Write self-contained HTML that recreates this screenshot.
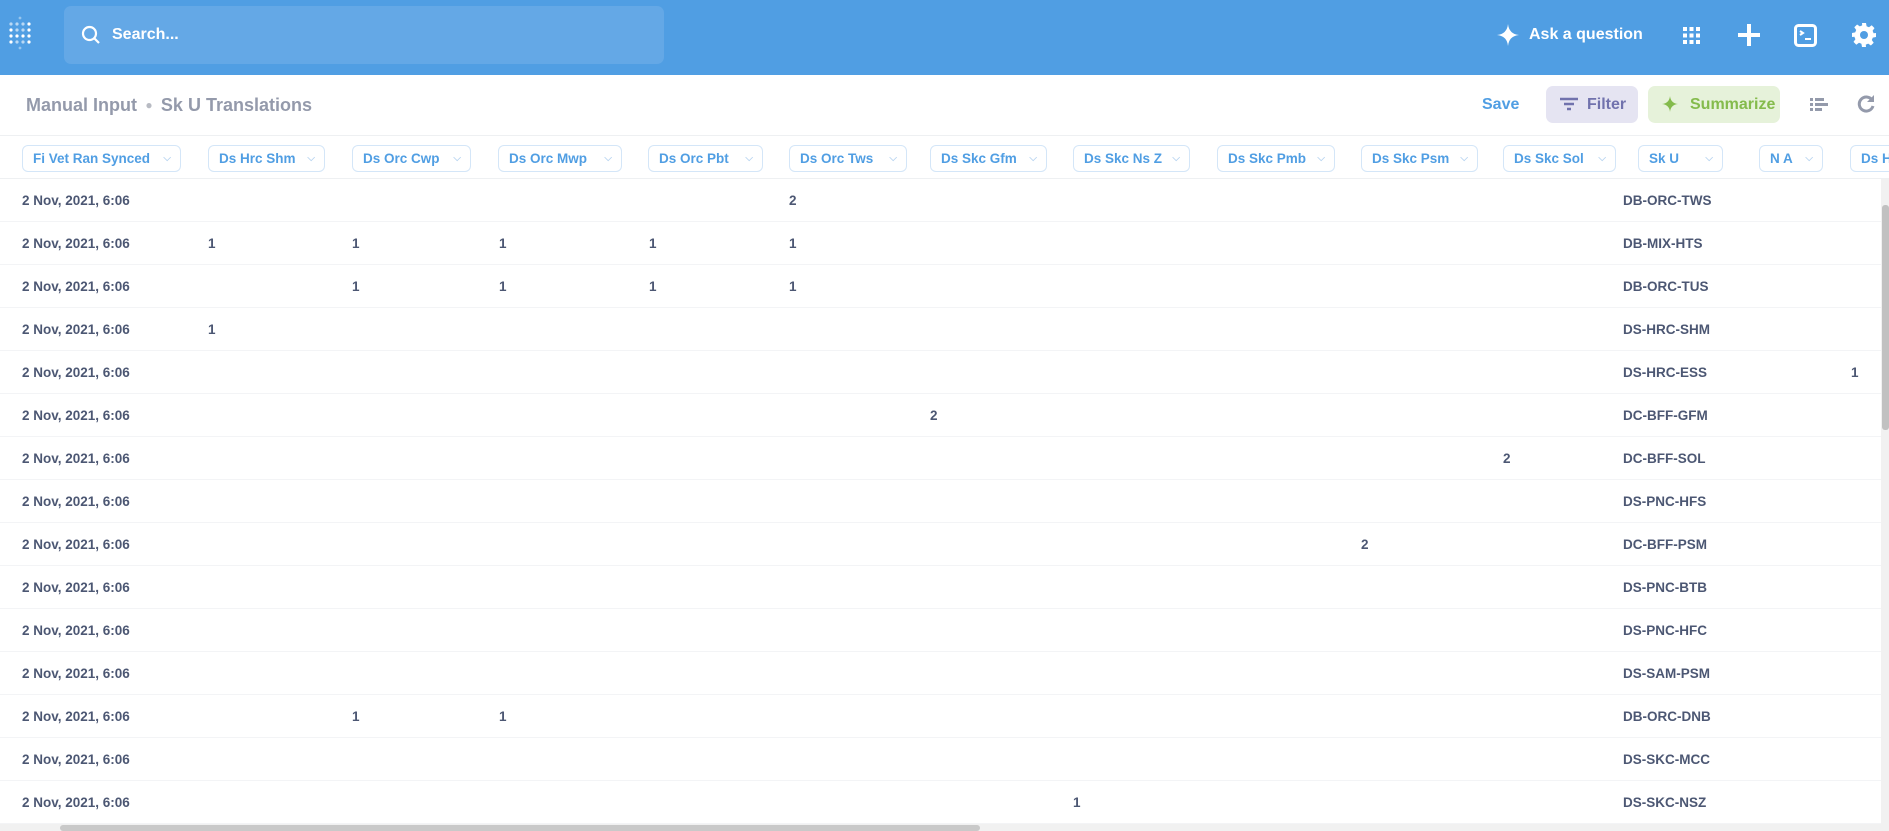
<!DOCTYPE html>
<html><head><style>
*{box-sizing:border-box;margin:0;padding:0}
body{width:1889px;height:831px;overflow:hidden;background:#fff;font-family:"Liberation Sans",sans-serif;position:relative}
.top{position:absolute;left:0;top:0;width:1889px;height:75px;background:#509ee3}
.search{position:absolute;left:64px;top:6px;width:600px;height:58px;background:#64a8e6;border-radius:7px;color:#fff;font-weight:bold;font-size:16px}
.search span{position:absolute;left:48px;top:20px}
.ask{position:absolute;left:1529px;top:26px;color:#fff;font-weight:bold;font-size:16px}
.bc{position:absolute;left:26px;top:95px;font-size:18px;color:#949aab;font-weight:bold}
.bar2{position:absolute;left:0;top:135px;width:1889px;border-top:1px solid #eef0f2}
.pill{position:absolute;top:145px;height:27px;border:1px solid #d4e6f8;border-radius:6px;color:#509ee3;font-weight:bold;font-size:13.5px;padding:5px 0 0 10px;white-space:nowrap;overflow:hidden}
.pill i{font-style:normal;color:#b8d4f0;font-size:10px;position:absolute;right:9px;top:7px}
.hl{position:absolute;left:0;top:178px;width:1889px;border-top:1px solid #eef0f2}
.row{position:absolute;left:0;width:1882px;height:43px;border-bottom:1px solid #f3f4f6}
.row span{position:absolute;top:14px;font-size:13.5px;font-weight:bold;color:#4c5773}
.btn{position:absolute;top:86px;height:37px;border-radius:7px;font-weight:bold;font-size:16px;padding-top:10px}
</style></head><body>
<div class="top">
<svg style="position:absolute;left:9px;top:15px" width="24" height="40" viewBox="0 0 24 40">
<g fill="#fff">
<circle cx="2" cy="9" r="1.6" opacity=".6"/><circle cx="8" cy="9" r="1.6" opacity=".6"/><circle cx="14" cy="9" r="1.6" opacity=".6"/><circle cx="20" cy="9" r="1.6"/>
<circle cx="2" cy="15" r="1.6"/><circle cx="8" cy="15" r="1.6" opacity=".6"/><circle cx="14" cy="15" r="1.6" opacity=".6"/><circle cx="20" cy="15" r="1.6"/>
<circle cx="2" cy="21" r="1.6"/><circle cx="8" cy="21" r="1.6"/><circle cx="14" cy="21" r="1.6"/><circle cx="20" cy="21" r="1.6"/>
<circle cx="2" cy="27" r="1.6"/><circle cx="8" cy="27" r="1.6" opacity=".6"/><circle cx="14" cy="27" r="1.6" opacity=".6"/><circle cx="20" cy="27" r="1.6"/>
<circle cx="11" cy="3" r="1.4" opacity=".4"/><circle cx="11" cy="33" r="1.4" opacity=".4"/></g></svg>
<div class="search"><svg style="position:absolute;left:17px;top:19px" width="20" height="20" viewBox="0 0 20 20"><circle cx="8.5" cy="8.5" r="6.5" fill="none" stroke="#fff" stroke-width="2.2"/><path d="M13 13l5 5" stroke="#fff" stroke-width="2.2"/></svg><span>Search...</span></div>
<svg style="position:absolute;left:1497px;top:24px" width="22" height="22" viewBox="0 0 22 22"><path d="M11 0Q12 10 22 11Q12 12 11 22Q10 12 0 11Q10 10 11 0Z" fill="#fff"/></svg>
<div class="ask">Ask a question</div>
<svg style="position:absolute;left:1683px;top:27px" width="17" height="17"><g fill="#fff"><rect x="0" y="0" width="4" height="4"/><rect x="6.5" y="0" width="4" height="4"/><rect x="13" y="0" width="4" height="4"/><rect x="0" y="6.5" width="4" height="4"/><rect x="6.5" y="6.5" width="4" height="4"/><rect x="13" y="6.5" width="4" height="4"/><rect x="0" y="13" width="4" height="4"/><rect x="6.5" y="13" width="4" height="4"/><rect x="13" y="13" width="4" height="4"/></g></svg>
<svg style="position:absolute;left:1738px;top:24px" width="22" height="22"><path d="M11 0v22M0 11h22" stroke="#fff" stroke-width="4"/></svg>
<svg style="position:absolute;left:1794px;top:24px" width="23" height="23"><rect x="1.5" y="1.5" width="20" height="20" rx="3" fill="none" stroke="#fff" stroke-width="3"/><path d="M6 7l3 2-3 2M11 15h6" stroke="#fff" stroke-width="2" fill="none"/></svg>
<svg style="position:absolute;left:1852px;top:23px" width="24" height="24" viewBox="0 0 24 24"><path fill="#fff" d="M10 0h4l.6 3.2 2.4 1 2.7-1.9 2.8 2.8-1.9 2.7 1 2.4L24 10v4l-3.2.6-1 2.4 1.9 2.7-2.8 2.8-2.7-1.9-2.4 1L14 24h-4l-.6-3.2-2.4-1-2.7 1.9-2.8-2.8 1.9-2.7-1-2.4L0 14v-4l3.2-.6 1-2.4-1.9-2.7 2.8-2.8 2.7 1.9 2.4-1z"/><circle cx="12" cy="12" r="4" fill="#509ee3"/></svg>
</div>
<div class="bc">Manual Input <span style="color:#b8bbc3;font-size:12px;position:relative;top:-2px">&nbsp;●&nbsp;</span> Sk U Translations</div>
<div class="btn" style="left:1482px;color:#509ee3">Save</div>
<div class="btn" style="left:1546px;width:92px;background:#e5e4f2;color:#7172ad;padding-left:41px"><svg style="position:absolute;left:14px;top:11px" width="18" height="14"><path d="M0 2h18M4 7h10M7 12h4" stroke="#7172ad" stroke-width="2.6"/></svg>Filter</div>
<div class="btn" style="left:1648px;width:132px;background:#e6f2da;color:#84bb4c;padding-left:42px"><svg style="position:absolute;left:14px;top:10px" width="16" height="16" viewBox="0 0 22 22"><path d="M11 0Q12 10 22 11Q12 12 11 22Q10 12 0 11Q10 10 11 0Z" fill="#84bb4c"/></svg>Summarize</div>
<svg style="position:absolute;left:1810px;top:98px" width="18" height="13"><g fill="#949aab"><rect x="0" y="0" width="3" height="3"/><rect x="5" y="0" width="9" height="3"/><rect x="0" y="5" width="3" height="3"/><rect x="5" y="5" width="13" height="3"/><rect x="0" y="10" width="3" height="3"/><rect x="5" y="10" width="7" height="3"/></g></svg>
<svg style="position:absolute;left:1857px;top:95px" width="18" height="18" viewBox="0 0 18 18"><path d="M15 5A7 7 0 1 0 16 11" fill="none" stroke="#949aab" stroke-width="3"/><path d="M17 0v7h-7z" fill="#949aab"/></svg>
<div class="bar2"></div>
<div class="pill" style="left:22px;width:159px">Fi Vet Ran Synced<i>⌵</i></div>
<div class="pill" style="left:208px;width:117px">Ds Hrc Shm<i>⌵</i></div>
<div class="pill" style="left:352px;width:119px">Ds Orc Cwp<i>⌵</i></div>
<div class="pill" style="left:498px;width:124px">Ds Orc Mwp<i>⌵</i></div>
<div class="pill" style="left:648px;width:115px">Ds Orc Pbt<i>⌵</i></div>
<div class="pill" style="left:789px;width:118px">Ds Orc Tws<i>⌵</i></div>
<div class="pill" style="left:930px;width:117px">Ds Skc Gfm<i>⌵</i></div>
<div class="pill" style="left:1073px;width:117px">Ds Skc Ns Z<i>⌵</i></div>
<div class="pill" style="left:1217px;width:118px">Ds Skc Pmb<i>⌵</i></div>
<div class="pill" style="left:1361px;width:117px">Ds Skc Psm<i>⌵</i></div>
<div class="pill" style="left:1503px;width:113px">Ds Skc Sol<i>⌵</i></div>
<div class="pill" style="left:1638px;width:85px">Sk U<i>⌵</i></div>
<div class="pill" style="left:1759px;width:64px">N A<i>⌵</i></div>
<div class="pill" style="left:1850px;width:50px">Ds H</div>
<div class="hl"></div>
<div class="row" style="top:179px"><span style="left:22px">2 Nov, 2021, 6:06</span><span style="left:789px">2</span><span style="left:1623px">DB-ORC-TWS</span></div>
<div class="row" style="top:222px"><span style="left:22px">2 Nov, 2021, 6:06</span><span style="left:208px">1</span><span style="left:352px">1</span><span style="left:499px">1</span><span style="left:649px">1</span><span style="left:789px">1</span><span style="left:1623px">DB-MIX-HTS</span></div>
<div class="row" style="top:265px"><span style="left:22px">2 Nov, 2021, 6:06</span><span style="left:352px">1</span><span style="left:499px">1</span><span style="left:649px">1</span><span style="left:789px">1</span><span style="left:1623px">DB-ORC-TUS</span></div>
<div class="row" style="top:308px"><span style="left:22px">2 Nov, 2021, 6:06</span><span style="left:208px">1</span><span style="left:1623px">DS-HRC-SHM</span></div>
<div class="row" style="top:351px"><span style="left:22px">2 Nov, 2021, 6:06</span><span style="left:1623px">DS-HRC-ESS</span><span style="left:1851px">1</span></div>
<div class="row" style="top:394px"><span style="left:22px">2 Nov, 2021, 6:06</span><span style="left:930px">2</span><span style="left:1623px">DC-BFF-GFM</span></div>
<div class="row" style="top:437px"><span style="left:22px">2 Nov, 2021, 6:06</span><span style="left:1503px">2</span><span style="left:1623px">DC-BFF-SOL</span></div>
<div class="row" style="top:480px"><span style="left:22px">2 Nov, 2021, 6:06</span><span style="left:1623px">DS-PNC-HFS</span></div>
<div class="row" style="top:523px"><span style="left:22px">2 Nov, 2021, 6:06</span><span style="left:1361px">2</span><span style="left:1623px">DC-BFF-PSM</span></div>
<div class="row" style="top:566px"><span style="left:22px">2 Nov, 2021, 6:06</span><span style="left:1623px">DS-PNC-BTB</span></div>
<div class="row" style="top:609px"><span style="left:22px">2 Nov, 2021, 6:06</span><span style="left:1623px">DS-PNC-HFC</span></div>
<div class="row" style="top:652px"><span style="left:22px">2 Nov, 2021, 6:06</span><span style="left:1623px">DS-SAM-PSM</span></div>
<div class="row" style="top:695px"><span style="left:22px">2 Nov, 2021, 6:06</span><span style="left:352px">1</span><span style="left:499px">1</span><span style="left:1623px">DB-ORC-DNB</span></div>
<div class="row" style="top:738px"><span style="left:22px">2 Nov, 2021, 6:06</span><span style="left:1623px">DS-SKC-MCC</span></div>
<div class="row" style="top:781px"><span style="left:22px">2 Nov, 2021, 6:06</span><span style="left:1073px">1</span><span style="left:1623px">DS-SKC-NSZ</span></div>
<div style="position:absolute;left:1881px;top:179px;width:8px;height:652px;background:#f1f1f1"></div>
<div style="position:absolute;left:1882px;top:205px;width:7px;height:225px;background:#c1c1c1;border-radius:3px"></div>
<div style="position:absolute;left:0;top:824px;width:1881px;height:7px;background:#f1f1f1"></div>
<div style="position:absolute;left:60px;top:825px;width:920px;height:6px;background:#c9c9c9;border-radius:3px"></div>
</body></html>
